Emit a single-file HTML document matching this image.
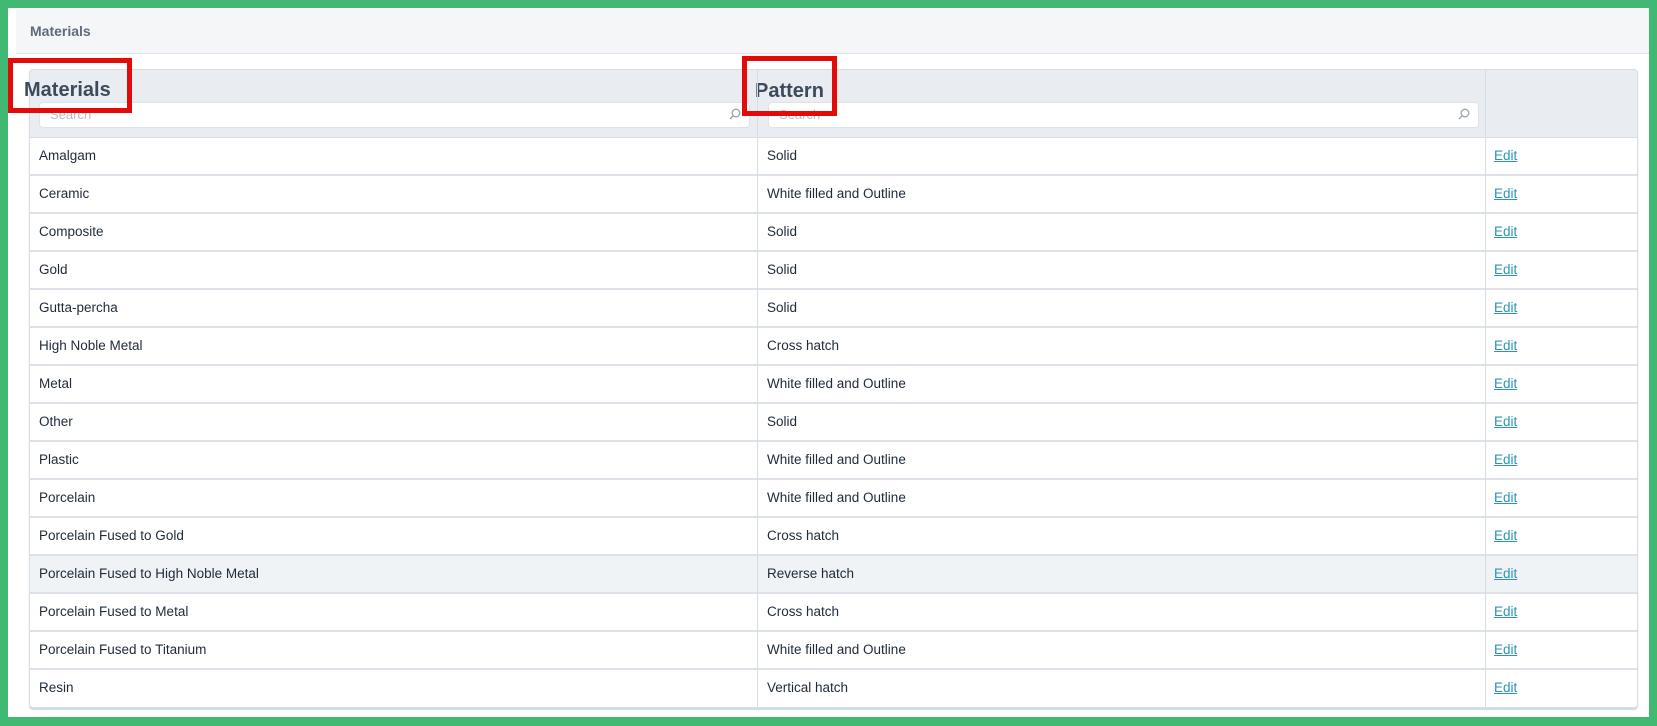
<!DOCTYPE html>
<html><head><meta charset="utf-8"><style>
*{box-sizing:border-box;margin:0;padding:0}
body{width:1657px;height:726px;background:#41b973;font-family:"Liberation Sans",sans-serif;position:relative;overflow:hidden}
.inner{position:absolute;left:8px;top:8px;width:1641px;height:709px;background:#fff}
.bar{position:absolute;left:8px;top:0;width:1633px;height:46px;background:#f5f6f8;border-bottom:1px solid #dde2e8}
.bar span{position:absolute;left:14px;top:15px;font-size:14px;font-weight:bold;color:#5f6b7a}
.tbl{position:absolute;left:29px;top:69px;width:1609px;height:639px;border:1px solid #d8dde3;border-radius:4px;box-shadow:0 2px 1px #d3d8de;overflow:hidden}
.hdr{position:absolute;left:0;top:0;width:100%;height:68px;background:#e9edf1;border-bottom:1px solid #d8dde3}
.vl{position:absolute;top:0;width:1px;height:100%;background:#d8dde3}
.h{position:absolute;top:8px;font-size:20px;font-weight:bold;color:#3d4a5c}
.srch{position:absolute;top:32px;height:26px;background:#fff;border:1px solid #dfe3e8;border-radius:4px;font-size:13px;color:#b5bcc5;padding:4px 10px}
.srch svg{position:absolute;right:8px;top:5px}
.row{position:absolute;left:0;width:100%;height:38px;border-bottom:2px solid #dde2e8;font-size:13.5px;color:#1f2a37}
.row span{position:absolute;top:10px}
.row a{position:absolute;top:10px;left:1464px;color:#2a95b5;text-decoration:underline}
.red{position:absolute;border:5px solid #e30a0a}
</style></head><body>
<div class="inner"><div class="bar"><span>Materials</span></div></div>
<div class="tbl">
<div class="hdr">
<div class="h" style="left:725px;top:10px;">Pattern</div>
<div class="srch" style="left:9px;width:711px;">Search<svg width="12" height="12" viewBox="0 0 12 12"><circle cx="7" cy="5" r="3.8" fill="none" stroke="#9aa3ad" stroke-width="1.3"/><path d="M4.3 7.7L1 11" stroke="#9aa3ad" stroke-width="1.3"/></svg></div>
<div class="srch" style="left:738px;width:711px;">Search<svg width="12" height="12" viewBox="0 0 12 12"><circle cx="7" cy="5" r="3.8" fill="none" stroke="#9aa3ad" stroke-width="1.3"/><path d="M4.3 7.7L1 11" stroke="#9aa3ad" stroke-width="1.3"/></svg></div>
</div>
<div class="row" style="top:68px"><span style="left:9px">Amalgam</span><span style="left:737px">Solid</span><a>Edit</a></div>
<div class="row" style="top:106px"><span style="left:9px">Ceramic</span><span style="left:737px">White filled and Outline</span><a>Edit</a></div>
<div class="row" style="top:144px"><span style="left:9px">Composite</span><span style="left:737px">Solid</span><a>Edit</a></div>
<div class="row" style="top:182px"><span style="left:9px">Gold</span><span style="left:737px">Solid</span><a>Edit</a></div>
<div class="row" style="top:220px"><span style="left:9px">Gutta-percha</span><span style="left:737px">Solid</span><a>Edit</a></div>
<div class="row" style="top:258px"><span style="left:9px">High Noble Metal</span><span style="left:737px">Cross hatch</span><a>Edit</a></div>
<div class="row" style="top:296px"><span style="left:9px">Metal</span><span style="left:737px">White filled and Outline</span><a>Edit</a></div>
<div class="row" style="top:334px"><span style="left:9px">Other</span><span style="left:737px">Solid</span><a>Edit</a></div>
<div class="row" style="top:372px"><span style="left:9px">Plastic</span><span style="left:737px">White filled and Outline</span><a>Edit</a></div>
<div class="row" style="top:410px"><span style="left:9px">Porcelain</span><span style="left:737px">White filled and Outline</span><a>Edit</a></div>
<div class="row" style="top:448px"><span style="left:9px">Porcelain Fused to Gold</span><span style="left:737px">Cross hatch</span><a>Edit</a></div>
<div class="row" style="top:486px;background:#f0f3f6"><span style="left:9px">Porcelain Fused to High Noble Metal</span><span style="left:737px">Reverse hatch</span><a>Edit</a></div>
<div class="row" style="top:524px"><span style="left:9px">Porcelain Fused to Metal</span><span style="left:737px">Cross hatch</span><a>Edit</a></div>
<div class="row" style="top:562px"><span style="left:9px">Porcelain Fused to Titanium</span><span style="left:737px">White filled and Outline</span><a>Edit</a></div>
<div class="row" style="top:600px;border-bottom:none"><span style="left:9px">Resin</span><span style="left:737px">Vertical hatch</span><a>Edit</a></div>
<div class="vl" style="left:727px"></div>
<div class="vl" style="left:1455px"></div>
</div>
<div class="h" style="left:24px;top:79px;">Materials</div>
<div class="red" style="left:8px;top:58px;width:124px;height:55px"></div>
<div class="red" style="left:742px;top:56px;width:95px;height:60px"></div>
</body></html>
